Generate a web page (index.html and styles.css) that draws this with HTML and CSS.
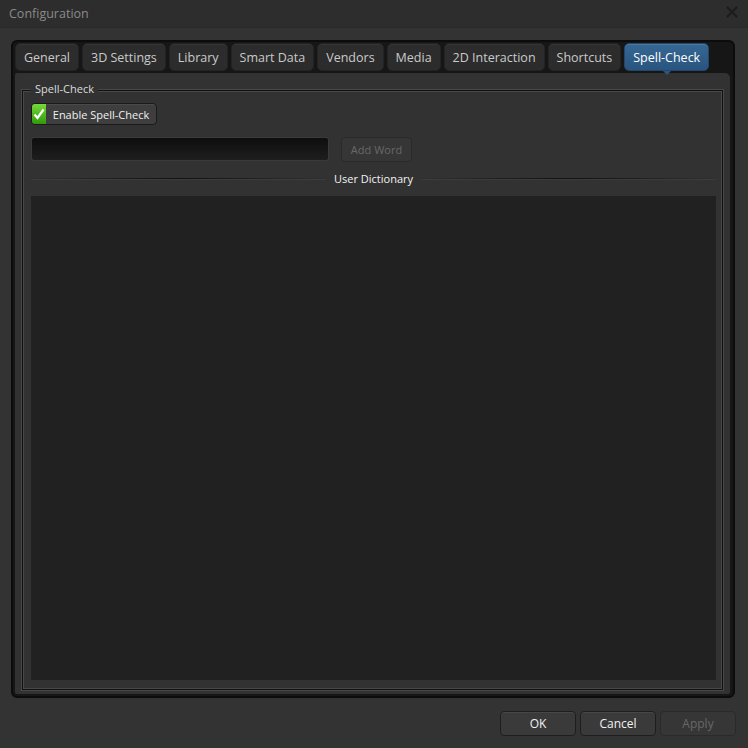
FILE: index.html
```html
<!DOCTYPE html>
<html><head>
  <meta charset="utf-8">
  <title>Configuration</title>
  <link rel="stylesheet" href="styles.css">
</head>
<body>

<div class="titlebar">
  <span class="title">Configuration</span>
  <svg class="close" width="12" height="12" viewBox="0 0 12 12"><path d="M1 1L11 11M11 1L1 11" stroke="#1c1c1c" stroke-width="2.2"/></svg>
</div>

<div class="main">
<div class="frame">
  <div class="tabs">
    <span class="tab">General</span>
    <span class="tab">3D Settings</span>
    <span class="tab">Library</span>
    <span class="tab">Smart Data</span>
    <span class="tab">Vendors</span>
    <span class="tab">Media</span>
    <span class="tab">2D Interaction</span>
    <span class="tab">Shortcuts</span>
    <span class="tab active">Spell-Check</span>
  </div>
  <div class="pane">
    <div class="group">
      <span class="legend">Spell-Check</span>
      <div class="toggle">
        <span class="check"><svg width="12" height="12" viewBox="0 0 12 12"><path d="M1.5 6.5L4.5 10L10.5 1.5" fill="none" stroke="#fff" stroke-width="2.2"/></svg></span>
        <span class="toggle-label">Enable Spell-Check</span>
      </div>
      <div class="addrow">
        <div class="input"></div>
        <span class="btn small disabled">Add Word</span>
      </div>
      <div class="sep"><span class="line"></span><span class="sep-label">User Dictionary</span><span class="line"></span></div>
      <div class="list"></div>
    </div>
  </div>
</div>
</div>

<div class="footer">
  <span class="btn">OK</span>
  <span class="btn">Cancel</span>
  <span class="btn disabled">Apply</span>
</div>

</body>
</html>
```

FILE: styles.css
```css
html,body {
  margin:0; padding:0; background:#333333; color:#e6e6e6;
  font-family:"Open Sans","Noto Sans",sans-serif; font-size:12px;
}
body { width:748px; height:748px; overflow:hidden; display:flex; flex-direction:column; }

.titlebar {
  height:27px; background:#2d2d2d; border-bottom:1px solid #2a2a2a;
  display:flex; align-items:center; justify-content:space-between;
  padding:0 10px 0 9px;
}
.title { color:#8a8a8a; font-size:12.5px; }
.close { margin-top:-3px; }

.main { padding:12px 13px 0 11px; }
.frame {
  height:651px; background:#161616; border:2px solid #0c0c0c;
  border-radius:6px; padding:1px 3px 2px 2px;
  display:flex; flex-direction:column;
}

.tabs { display:flex; gap:3px; height:28px; }
.tab {
  position:relative;
  display:flex; align-items:center; padding:0 8px;
  background:#2c2c2c; color:#cacaca; font-size:12.5px;
  border:1px solid #232323; border-radius:5px;
  box-shadow:inset 0 1px 0 #353535;
}
.tab.active {
  background:linear-gradient(#366793,#29557f); color:#fff;
  border-color:#23466a; box-shadow:inset 0 1px 0 #4579a6;
}
.tab.active::after {
  content:""; position:absolute; left:50%; bottom:-5px; margin-left:-4px;
  border-left:4px solid transparent; border-right:4px solid transparent;
  border-top:4px solid #29557f;
}

.pane {
  flex:1; margin-top:2px; background:#323232; border-radius:2px 5px 2px 2px;
  padding:17px 7px 4px 7px; display:flex;
}

.group {
  position:relative; flex:1; display:flex; flex-direction:column;
  border:1px solid #111; box-shadow:0 0 0 1px #484848, inset 0 0 0 1px #484848;
  padding:12px 6px 9px 8px;
}
.legend {
  position:absolute; left:8px; top:-10px; padding:0 4px;
  background:#323232; font-size:11px; color:#dcdcdc;
}

.toggle {
  align-self:flex-start; display:flex; height:20px; width:124px;
  border:1px solid #1a1a1a; border-radius:4px; background:#3e3e3e; overflow:hidden;
  box-shadow:inset 0 1px 0 #4a4a4a;
}
.check {
  width:14px; display:flex; align-items:center; justify-content:center;
  background:linear-gradient(#78d93a,#2f9a0c);
}
.toggle-label { flex:1; display:flex; align-items:center; justify-content:center; font-size:11px; color:#f0f0f0; }

.addrow { display:flex; gap:12px; margin-top:12px; height:24px; }
.input {
  width:296px; border:1px solid #3a3a3a; border-radius:3px;
  background:linear-gradient(#0e0e0e,#1e1e1e);
}

.btn {
  display:flex; align-items:center; justify-content:center;
  width:72px; height:23px; background:#3a3a3a; color:#f2f2f2; font-size:12px;
  border:1px solid #1e1e1e; border-radius:4px; box-shadow:inset 0 1px 0 #474747;
}
.btn.small { width:69px; font-size:11px; }
.btn.disabled { background:#363636; color:#686868; border-color:#2a2a2a; box-shadow:none; }

.sep { display:flex; align-items:center; gap:8px; height:18px; margin-top:8px; }
.sep .line {
  flex:1; height:1px;
  background:linear-gradient(90deg,#303030,#111 50%,#303030);
  box-shadow:0 1px 0 #3c3c3c;
}
.sep-label { font-size:11px; color:#f4f4f4; }

.list { flex:1; margin-top:9px; background:#212121; }

.footer { display:flex; justify-content:flex-end; gap:4px; padding:13px 12px 0 0; }
.footer .btn { width:74px; height:23px; }
```
